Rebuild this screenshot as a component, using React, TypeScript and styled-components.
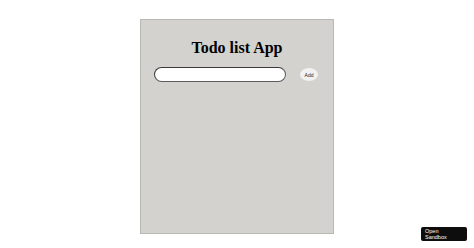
import React from "react";
import styled, { createGlobalStyle } from "styled-components";

const Global = createGlobalStyle`
  html, body { margin: 0; padding: 0; background: #ffffff; }
  body { font-family: "Liberation Serif", serif; }
`;

const Page = styled.div`
  width: 474px;
  height: 248px;
  display: flex;
  justify-content: center;
  padding-top: 19px;
  box-sizing: border-box;
`;

const Panel = styled.div`
  width: 194px;
  height: 215px;
  box-sizing: border-box;
  background: #d3d2ce;
  border: 1px solid #b8b8b5;
  display: flex;
  flex-direction: column;
  align-items: center;
`;

const Title = styled.h1`
  margin: 18px 0 0;
  font-family: "Liberation Serif", "Times New Roman", serif;
  font-weight: bold;
  font-size: 16px;
  line-height: 20px;
  color: #000;
`;

const Row = styled.div`
  margin-top: 9px;
  display: flex;
  align-items: center;
  gap: 14px;
  padding-right: 2px;
`;

const Input = styled.input`
  width: 132px;
  height: 15px;
  box-sizing: border-box;
  border-radius: 8px;
  border: 1.5px solid #5c5c5c;
  border-top-color: #3a3a3a;
  border-left-color: #3a3a3a;
  background: #ffffff;
  outline: none;
  padding: 0 6px;
`;

const AddButton = styled.button`
  width: 18px;
  height: 13px;
  padding: 0;
  border: none;
  border-radius: 50%;
  background: #f2f2f2;
  font-family: "Liberation Sans", Arial, sans-serif;
  font-size: 5px;
  color: #222;
  display: flex;
  align-items: center;
  justify-content: center;
`;

const SandboxButton = styled.a`
  position: fixed;
  right: 7px;
  bottom: 7px;
  width: 46px;
  height: 14px;
  box-sizing: border-box;
  background: #0d0d0d;
  border-radius: 2px;
  color: #ffffff;
  font-family: "Liberation Sans", Arial, sans-serif;
  font-size: 5.5px;
  line-height: 6px;
  padding: 1px 4px;
  text-decoration: none;
`;

export default function App() {
  return (
    <>
      <Global />
      <Page>
        <Panel>
          <Title>Todo list App</Title>
          <Row>
            <Input type="text" />
            <AddButton>Add</AddButton>
          </Row>
        </Panel>
      </Page>
      <SandboxButton href="#">
        Open
        <br />
        Sandbox
      </SandboxButton>
    </>
  );
}
